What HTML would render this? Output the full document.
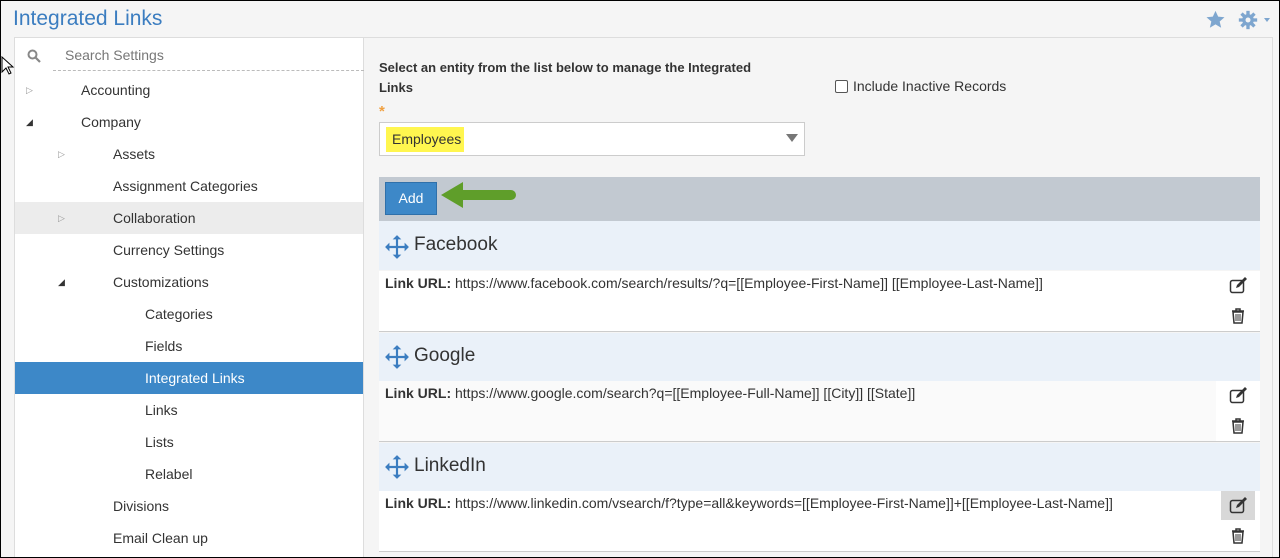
<!DOCTYPE html><html><head><style>
*{margin:0;padding:0;box-sizing:border-box}
html,body{width:1280px;height:558px;overflow:hidden}
body{background:#f5f5f5;font-family:"Liberation Sans",sans-serif;position:relative;color:#333}
.a{position:absolute}
.title{left:13px;top:7px;font-size:21px;color:#3b7dc0}
.side{left:14px;top:37px;width:350px;height:521px;background:#fff;border:1px solid #ddd;border-bottom:none}
.row{position:absolute;left:0;width:348px;height:32px;line-height:32px;font-size:14px;color:#333}
.tri{position:absolute;font-size:9px;color:#999}
.main{left:364px;top:37px;width:909px;height:521px;border-right:1px solid #ddd;border-top:1px solid #ddd}
.hdr{left:379px;width:881px;height:49px;background:#eaf1f9;font-size:19px;color:#333}
.bd{left:379px;width:881px;height:61px;background:#fff;border-bottom:1px solid #ccc;font-size:14px;padding:4px 6px}
.bd b{font-weight:bold}
</style></head><body>
<div class="a title">Integrated Links</div>
<svg class="a" style="left:1205px;top:10px" width="21" height="20" viewBox="0 0 24 24"><path d="M12 1l3.2 7 7.6.7-5.8 5.1 1.8 7.5L12 17.3 5.2 21.3 7 13.8 1.2 8.7 8.8 8z" fill="#7ea6cf"/></svg>
<svg class="a" style="left:1238px;top:10px" width="20" height="20" viewBox="0 0 24 24"><g fill="#7ea6cf"><circle cx="12" cy="12" r="7"/><rect x="10" y="1" width="4" height="22"/><rect x="1" y="10" width="22" height="4"/><rect x="10" y="1" width="4" height="22" transform="rotate(45 12 12)"/><rect x="10" y="1" width="4" height="22" transform="rotate(-45 12 12)"/></g><circle cx="12" cy="12" r="3" fill="#f5f5f5"/></svg>
<div class="a" style="left:1264px;top:18px;border:3px solid transparent;border-top:4px solid #7ea6cf"></div>
<div class="a side">
<svg class="a" style="left:12px;top:11px" width="14" height="14" viewBox="0 0 14 14"><circle cx="5.5" cy="5.5" r="4" stroke="#888" stroke-width="2" fill="none"/><path d="M8.5 8.5L13 13" stroke="#888" stroke-width="2.2"/></svg>
<div class="a" style="left:50px;top:9px;font-size:14px;color:#777">Search Settings</div>
<div class="a" style="left:38px;top:32px;width:311px;border-top:1px dashed #bbb"></div>
<div class="row" style="top:36px"><span class="tri" style="left:11px">▷</span><span class="a" style="left:66px">Accounting</span></div>
<div class="row" style="top:68px"><span class="tri" style="left:11px;color:#333">◢</span><span class="a" style="left:66px">Company</span></div>
<div class="row" style="top:100px"><span class="tri" style="left:43px">▷</span><span class="a" style="left:98px">Assets</span></div>
<div class="row" style="top:132px"><span class="a" style="left:98px">Assignment Categories</span></div>
<div class="row" style="top:164px;background:#ececec"><span class="tri" style="left:43px">▷</span><span class="a" style="left:98px">Collaboration</span></div>
<div class="row" style="top:196px"><span class="a" style="left:98px">Currency Settings</span></div>
<div class="row" style="top:228px"><span class="tri" style="left:43px;color:#333">◢</span><span class="a" style="left:98px">Customizations</span></div>
<div class="row" style="top:260px"><span class="a" style="left:130px">Categories</span></div>
<div class="row" style="top:292px"><span class="a" style="left:130px">Fields</span></div>
<div class="row" style="top:324px;background:#3d88c8;color:#fff"><span class="a" style="left:130px">Integrated Links</span></div>
<div class="row" style="top:356px"><span class="a" style="left:130px">Links</span></div>
<div class="row" style="top:388px"><span class="a" style="left:130px">Lists</span></div>
<div class="row" style="top:420px"><span class="a" style="left:130px">Relabel</span></div>
<div class="row" style="top:452px"><span class="a" style="left:98px">Divisions</span></div>
<div class="row" style="top:484px"><span class="a" style="left:98px">Email Clean up</span></div>
</div>
<div class="a main"></div>
<div class="a" style="left:379px;top:58px;font-size:13px;font-weight:bold;line-height:20px;width:405px;color:#333">Select an entity from the list below to manage the Integrated Links</div>
<div class="a" style="left:835px;top:80px;width:13px;height:13px;border:1px solid #555;border-radius:2px;background:#fff"></div>
<div class="a" style="left:853px;top:78px;font-size:14px;color:#333">Include Inactive Records</div>
<div class="a" style="left:379px;top:103px;color:#f0a040;font-size:15px;font-weight:bold">*</div>
<div class="a" style="left:379px;top:122px;width:426px;height:34px;background:#fff;border:1px solid #ccc"></div>
<div class="a" style="left:386px;top:127px;width:78px;height:25px;background:#fff64f"></div>
<div class="a" style="left:392px;top:131px;font-size:14px;color:#333">Employees</div>
<div class="a" style="left:786px;top:134px;border:6px solid transparent;border-top:8px solid #777;border-bottom:none"></div>
<div class="a" style="left:379px;top:177px;width:881px;height:44px;background:#c2c9d1"></div>
<div class="a" style="left:385px;top:182px;width:52px;height:33px;background:#3d88c8;border:1px solid #2f70aa;color:#fff;font-size:14px;text-align:center;line-height:31px">Add</div>
<svg class="a" style="left:438px;top:180px" width="80" height="32" viewBox="0 0 80 32"><path d="M3 16L25 3v8h48a5 5 0 0 1 0 10H25v8z" fill="#5f9e2a" transform="translate(0,-1)"/></svg>
<div class="a hdr" style="top:221px"></div><div class="a bd" style="top:271px"><b>Link URL:</b> https://www.facebook.com/search/results/?q=[[Employee-First-Name]] [[Employee-Last-Name]]</div>
<div class="a hdr" style="top:333px"></div><div class="a bd" style="top:381px;background:#fafafa"><b>Link URL:</b> https://www.google.com/search?q=[[Employee-Full-Name]] [[City]] [[State]]</div>
<div class="a hdr" style="top:443px"></div><div class="a bd" style="top:491px"><b>Link URL:</b> https://www.linkedin.com/vsearch/f?type=all&amp;keywords=[[Employee-First-Name]]+[[Employee-Last-Name]]</div>
<div class="a" style="left:1216px;top:381px;width:44px;height:60px;background:#fff"></div>
<div class="a" style="left:1221px;top:491px;width:34px;height:29px;background:#d8d8d8"></div>
<div class="a" style="left:414px;top:234px;font-size:19px">Facebook</div>
<div class="a" style="left:414px;top:345px;font-size:19px">Google</div>
<div class="a" style="left:414px;top:455px;font-size:19px">LinkedIn</div>
<svg width="0" height="0" style="position:absolute"><defs><g id="mv"><path d="M12 1l4 4h-3v6h6V8l4 4-4 4v-3h-6v6h3l-4 4-4-4h3v-6H5v3l-4-4 4-4v3h6V5H8z" fill="#3b7dc0"/></g><g id="ed"><rect x="1.5" y="4.5" width="13" height="12" rx="2" fill="none" stroke="#333" stroke-width="1.5"/><path d="M7 12l1-3 8-8 2 2-8 8z" fill="#333"/></g><g id="tr"><path d="M3 4h12M7 4V2h4v2M4 5h10l-1 11H5z" fill="none" stroke="#333" stroke-width="1.5"/><path d="M7 7v7M9 7v7M11 7v7" stroke="#333"/></g></defs></svg>
<svg class="a" style="left:384px;top:234px" width="26" height="26" viewBox="0 0 24 24"><use href="#mv"/></svg>
<svg class="a" style="left:384px;top:344px" width="26" height="26" viewBox="0 0 24 24"><use href="#mv"/></svg>
<svg class="a" style="left:384px;top:454px" width="26" height="26" viewBox="0 0 24 24"><use href="#mv"/></svg>
<svg class="a" style="left:1229px;top:276px" width="20" height="18" viewBox="0 0 20 18"><use href="#ed"/></svg>
<svg class="a" style="left:1229px;top:386px" width="20" height="18" viewBox="0 0 20 18"><use href="#ed"/></svg>
<svg class="a" style="left:1229px;top:496px" width="20" height="18" viewBox="0 0 20 18"><use href="#ed"/></svg>
<svg class="a" style="left:1229px;top:307px" width="18" height="18" viewBox="0 0 18 18"><use href="#tr"/></svg>
<svg class="a" style="left:1229px;top:417px" width="18" height="18" viewBox="0 0 18 18"><use href="#tr"/></svg>
<svg class="a" style="left:1229px;top:527px" width="18" height="18" viewBox="0 0 18 18"><use href="#tr"/></svg>
<svg class="a" style="left:1px;top:56px" width="14" height="20" viewBox="0 0 14 20"><path d="M1 1v15l4-4 3 6 2-1-3-6h5z" fill="#fff" stroke="#000"/></svg>
<div class="a" style="left:0;top:0;width:1280px;height:558px;border:1px solid #000;pointer-events:none"></div>
</body></html>
